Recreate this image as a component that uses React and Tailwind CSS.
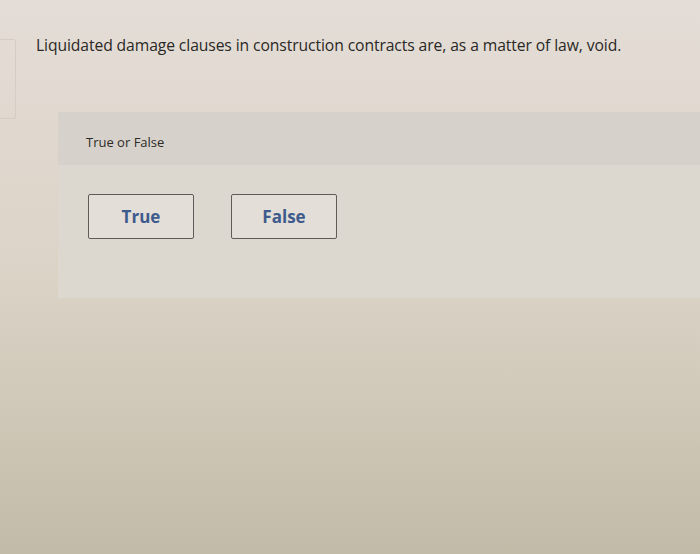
import React from 'react';

const options = ['True', 'False'];

const App = () => {
  return (
    <div
      className="w-[700px] h-[554px] overflow-hidden bg-gradient-to-b from-[#e4ddd7] via-[#dbd3c6] to-[#c2bba8] text-[#2b2926] flex"
      style={{ fontFamily: '"Open Sans", "Liberation Sans", sans-serif' }}
    >
      {/* faint edge of the previous card */}
      <div className="w-[16px] h-[80px] mt-[39px] border border-l-0 border-[#d4ccc5] rounded-r-[3px] shrink-0" />

      <div className="flex-1 flex flex-col pl-[20px]">
        <p className="pt-[34px] text-[15.7px] leading-[22px] tracking-[-0.1px] text-[#2a2825]">
          Liquidated damage clauses in construction contracts are, as a matter of law, void.
        </p>

        <div className="ml-[22px] mt-[56px] h-[186px] bg-[#dcd8d0] flex flex-col">
          <div className="h-[53px] bg-[#d6d1ca] pl-[28px] pt-[21px]">
            <span className="block text-[13px] leading-[18px] text-[#2d2b28]">True or False</span>
          </div>
          <div className="flex gap-[37px] pl-[30px] pt-[29px]">
            {options.map(opt => (
              <button
                key={opt}
                className="w-[106px] h-[45px] border border-[#5f5b56] rounded-[2px] bg-[#e3ded8] text-[17px] font-bold text-[#3d5b8c] flex items-center justify-center"
              >
                {opt}
              </button>
            ))}
          </div>
        </div>
      </div>
    </div>
  );
};

export default App;
